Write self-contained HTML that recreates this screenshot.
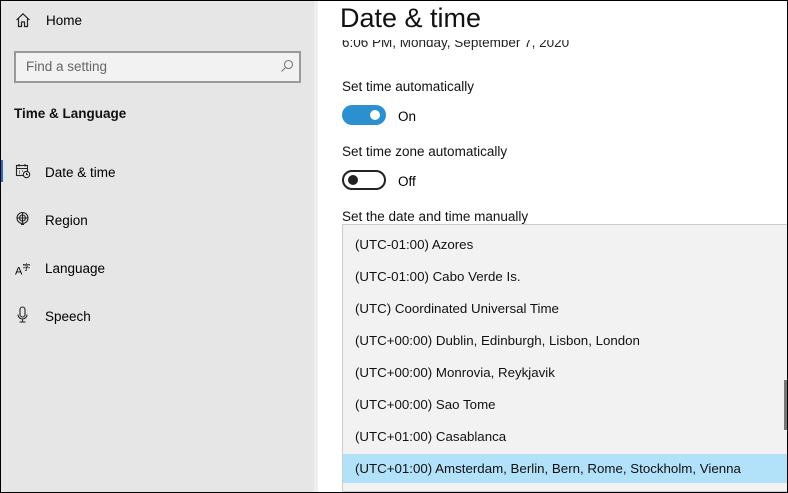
<!DOCTYPE html>
<html><head><meta charset="utf-8"><style>
*{margin:0;padding:0;box-sizing:border-box}
body{width:788px;height:493px;overflow:hidden;font-family:"Liberation Sans",sans-serif;color:#000;background:#fff;position:relative}
.frame{position:absolute;inset:0;border:1px solid #000;pointer-events:none;z-index:10}
.side{position:absolute;left:0;top:0;width:314px;height:493px;background:#e6e6e6}
.strip{position:absolute;left:314px;top:0;width:4px;height:493px;background:#efefef}
.t{position:absolute;font-size:13.5px;white-space:nowrap}
.search{position:absolute;left:14px;top:51px;width:287px;height:32px;border:2px solid #999;background:#f2f2f2}
.dd{position:absolute;left:342px;top:224px;width:445px;height:268px;background:#f2f2f2;border:1px solid #ccc;border-right:none}
.row{position:absolute;left:12px;font-size:13.3px;color:#111;white-space:nowrap}
</style></head><body>
<div class="side"></div><div class="strip"></div>
<svg style="position:absolute;left:15px;top:12px" width="16" height="16" viewBox="0 0 16 16" fill="none" stroke="#222" stroke-width="1.2"><path d="M1.5 8L8 1.8 14.5 8M3.5 6.5V14.5H6.5V10H9.5V14.5H12.5V6.5"/></svg>
<div class="t" style="left:46px;top:13px">Home</div>
<div class="search"></div>
<div class="t" style="left:26px;top:59px;color:#666">Find a setting</div>
<svg style="position:absolute;left:280px;top:59px" width="14" height="14" viewBox="0 0 14 14" fill="none" stroke="#777" stroke-width="1.1"><circle cx="8.5" cy="5.5" r="4"/><path d="M5.5 8.5L1.5 12.5"/></svg>
<div class="t" style="left:14px;top:106px;font-weight:bold;color:#111">Time &amp; Language</div>
<div style="position:absolute;left:1px;top:160px;width:2px;height:22px;background:#2a6bb5"></div>
<svg style="position:absolute;left:15px;top:163px" width="16" height="16" viewBox="0 0 16 16" fill="none" stroke="#222" stroke-width="1.1"><rect x="1.5" y="2.5" width="11" height="10"/><path d="M1.5 5.5H12.5M4 1V3.5M10 1V3.5M4 8H5M7 8H8M4 10H5"/><circle cx="11.5" cy="11.5" r="3.2" fill="#e6e6e6"/><path d="M11.5 9.8V11.6H12.8"/></svg>
<div class="t" style="left:45px;top:165px">Date &amp; time</div>
<svg style="position:absolute;left:15px;top:211px" width="16" height="16" viewBox="0 0 16 16" fill="none" stroke="#222" stroke-width="1.1"><circle cx="7.5" cy="7" r="5.5"/><circle cx="7.5" cy="7" r="3"/><path d="M2 7H13M7.5 1.5V12.5M6 13.5H9"/></svg>
<div class="t" style="left:45px;top:213px">Region</div>
<div class="t" style="left:15px;top:262px;font-size:11px">A<sup style="font-size:8px">字</sup></div>
<div class="t" style="left:45px;top:261px">Language</div>
<svg style="position:absolute;left:15px;top:306px" width="16" height="18" viewBox="0 0 16 18" fill="none" stroke="#222" stroke-width="1.1"><rect x="5" y="1" width="5" height="10" rx="2.5"/><path d="M3 8.5A4.5 4.5 0 0 0 12 8.5M7.5 13V16M4.5 16H10.5"/></svg>
<div class="t" style="left:45px;top:309px">Speech</div>

<div class="t" style="left:342px;top:35px;color:#222">6:06 PM, Monday, September 7, 2020</div>
<div style="position:absolute;left:318px;top:0;width:470px;height:40px;background:#fff"></div>
<div class="t" style="left:340px;top:3px;font-size:27px;color:#111">Date &amp; time</div>
<div class="t" style="left:342px;top:79px;color:#111">Set time automatically</div>
<div style="position:absolute;left:342px;top:105px;width:44px;height:20px;border-radius:10px;background:#2b8fd0"></div>
<div style="position:absolute;left:370px;top:110px;width:10px;height:10px;border-radius:5px;background:#fff"></div>
<div class="t" style="left:398px;top:109px">On</div>
<div class="t" style="left:342px;top:144px;color:#111">Set time zone automatically</div>
<div style="position:absolute;left:342px;top:170px;width:44px;height:20px;border-radius:10px;border:2px solid #222;background:#fff"></div>
<div style="position:absolute;left:348px;top:175px;width:10px;height:10px;border-radius:5px;background:#222"></div>
<div class="t" style="left:398px;top:174px">Off</div>
<div class="t" style="left:342px;top:209px;color:#111">Set the date and time manually</div>
<div class="dd">
<div class="row" style="top:12px">(UTC-01:00) Azores</div>
<div class="row" style="top:44px">(UTC-01:00) Cabo Verde Is.</div>
<div class="row" style="top:76px">(UTC) Coordinated Universal Time</div>
<div class="row" style="top:108px">(UTC+00:00) Dublin, Edinburgh, Lisbon, London</div>
<div class="row" style="top:140px">(UTC+00:00) Monrovia, Reykjavik</div>
<div class="row" style="top:172px">(UTC+00:00) Sao Tome</div>
<div class="row" style="top:204px">(UTC+01:00) Casablanca</div>
<div style="position:absolute;left:0;top:229px;width:444px;height:29px;background:#b2e1fa"></div>
<div class="row" style="top:236px">(UTC+01:00) Amsterdam, Berlin, Bern, Rome, Stockholm, Vienna</div>
<div style="position:absolute;left:441px;top:155px;width:3px;height:50px;background:#777"></div>
</div>
<div class="frame"></div>
</body></html>
